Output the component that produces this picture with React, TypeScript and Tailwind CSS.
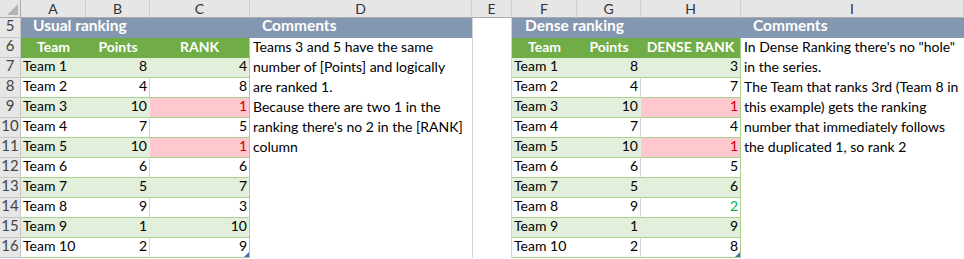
import React from 'react';

// Excel sheet: usual vs dense ranking, two tables side by side with comments.

type Row = { team: string; points: number; rank: number; flag?: 'dup' | 'next' };

const USUAL: Row[] = [
  { team: 'Team 1', points: 8, rank: 4 },
  { team: 'Team 2', points: 4, rank: 8 },
  { team: 'Team 3', points: 10, rank: 1, flag: 'dup' },
  { team: 'Team 4', points: 7, rank: 5 },
  { team: 'Team 5', points: 10, rank: 1, flag: 'dup' },
  { team: 'Team 6', points: 6, rank: 6 },
  { team: 'Team 7', points: 5, rank: 7 },
  { team: 'Team 8', points: 9, rank: 3 },
  { team: 'Team 9', points: 1, rank: 10 },
  { team: 'Team 10', points: 2, rank: 9 },
];

const DENSE: Row[] = [
  { team: 'Team 1', points: 8, rank: 3 },
  { team: 'Team 2', points: 4, rank: 7 },
  { team: 'Team 3', points: 10, rank: 1, flag: 'dup' },
  { team: 'Team 4', points: 7, rank: 4 },
  { team: 'Team 5', points: 10, rank: 1, flag: 'dup' },
  { team: 'Team 6', points: 6, rank: 5 },
  { team: 'Team 7', points: 5, rank: 6 },
  { team: 'Team 8', points: 9, rank: 2, flag: 'next' },
  { team: 'Team 9', points: 1, rank: 9 },
  { team: 'Team 10', points: 2, rank: 8 },
];

const USUAL_NOTE = [
  'Teams 3 and 5 have the same',
  'number of [Points] and logically',
  'are ranked 1.',
  'Because there are two 1 in the',
  "ranking there's no 2 in the [RANK]",
  'column',
];

const DENSE_NOTE = [
  'In Dense Ranking there\'s no "hole"',
  'in the series.',
  'The Team that ranks 3rd (Team 8 in',
  'this example) gets the ranking',
  'number that immediately follows',
  'the duplicated 1, so rank 2',
];

const COLS = ['', 'A', 'B', 'C', 'D', 'E', 'F', 'G', 'H', 'I'];

function RowHead({ n }: { n: number }) {
  return (
    <div className="bg-[#e6e6e6] border-r border-b border-[#c8c8c8] flex items-end justify-center pb-px text-[15px] text-[#444]">
      {n}
    </div>
  );
}

function TableCells({ r, i }: { r: Row; i: number }) {
  const band = i % 2 === 0;
  const fill = band ? 'bg-[#e2efda]' : 'bg-white';
  const sep = band ? 'border-r border-[#e2efda]' : 'border-r border-[#d4d4d4]';
  const last = i === 9;
  const rankFill = r.flag === 'dup' ? 'bg-[#ffc7ce] text-[#d00000]' : r.flag === 'next' ? `${fill} text-[#00b050]` : fill;
  return (
    <>
      <div className={`${fill} border-b border-[#a9d08e] px-[2px] pb-px flex items-end`}>{r.team}</div>
      <div className={`${fill} ${sep} border-b border-b-[#a9d08e] px-[2px] pb-px flex items-end justify-end`}>{r.points}</div>
      <div className={`${rankFill} border-b border-r border-[#a9d08e] px-[2px] pb-px flex items-end justify-end relative`}>
        {r.rank}
        {last && <span className="absolute right-0 bottom-0 w-0 h-0 border-l-[5px] border-l-transparent border-b-[5px] border-b-[#4a6db4]" />}
      </div>
    </>
  );
}

function Note({ lines }: { lines: string[] }) {
  return (
    <div className="row-span-11 bg-white px-[3px]">
      {lines.map(l => (
        <div key={l} className="h-[20px] pb-px flex items-end whitespace-nowrap">{l}</div>
      ))}
    </div>
  );
}

export default function App() {
  const title = 'bg-[#8497b0] text-white text-[15.5px] font-bold flex items-end pb-px';
  const head = 'bg-[#70ad47] text-white font-bold flex items-end pb-px justify-center';
  return (
    <div
      className="w-[964px] h-[259px] bg-white overflow-hidden text-[14px] text-black grid grid-cols-[21px_65px_64px_100px_222px_40px_65px_64px_100px_223px] grid-rows-[18px_repeat(12,20px)]"
      style={{ fontFamily: 'Lato, "Liberation Sans", sans-serif' }}
    >
      {COLS.map((c, i) =>
        i === 0 ? (
          <div key="corner" className="bg-[#e6e6e6] border-r border-b border-[#ababab] relative">
            <span className="absolute right-[2px] bottom-[2px] w-0 h-0 border-l-[11px] border-l-transparent border-b-[11px] border-b-[#b4b4b4]" />
          </div>
        ) : (
          <div key={c} className="bg-[#e6e6e6] border-r border-[#d0d0d0] border-b border-b-[#ababab] flex items-center justify-center text-[14px] text-[#333]">
            {c}
          </div>
        )
      )}

      {/* row 5: section titles */}
      <RowHead n={5} />
      <div className={`col-span-3 ${title} pl-[12px]`}>Usual ranking</div>
      <div className={`${title} pl-[12px]`}>Comments</div>
      <div className="row-span-12 bg-white border-l border-r border-[#d4d4d4]" />
      <div className={`col-span-3 ${title} pl-[13px]`}>Dense ranking</div>
      <div className={`${title} pl-[12px]`}>Comments</div>

      {/* row 6: table headers */}
      <RowHead n={6} />
      <div className={head}>Team</div>
      <div className={head}>Points</div>
      <div className={`${head} border-r border-[#a9d08e]`}>RANK</div>
      <Note lines={USUAL_NOTE} />
      <div className={head}>Team</div>
      <div className={head}>Points</div>
      <div className={`${head} border-r border-[#a9d08e]`}>DENSE RANK</div>
      <Note lines={DENSE_NOTE} />

      {USUAL.map((r, i) => (
        <React.Fragment key={r.team}>
          <RowHead n={i + 7} />
          <TableCells r={r} i={i} />
          <TableCells r={DENSE[i]} i={i} />
        </React.Fragment>
      ))}
    </div>
  );
}
